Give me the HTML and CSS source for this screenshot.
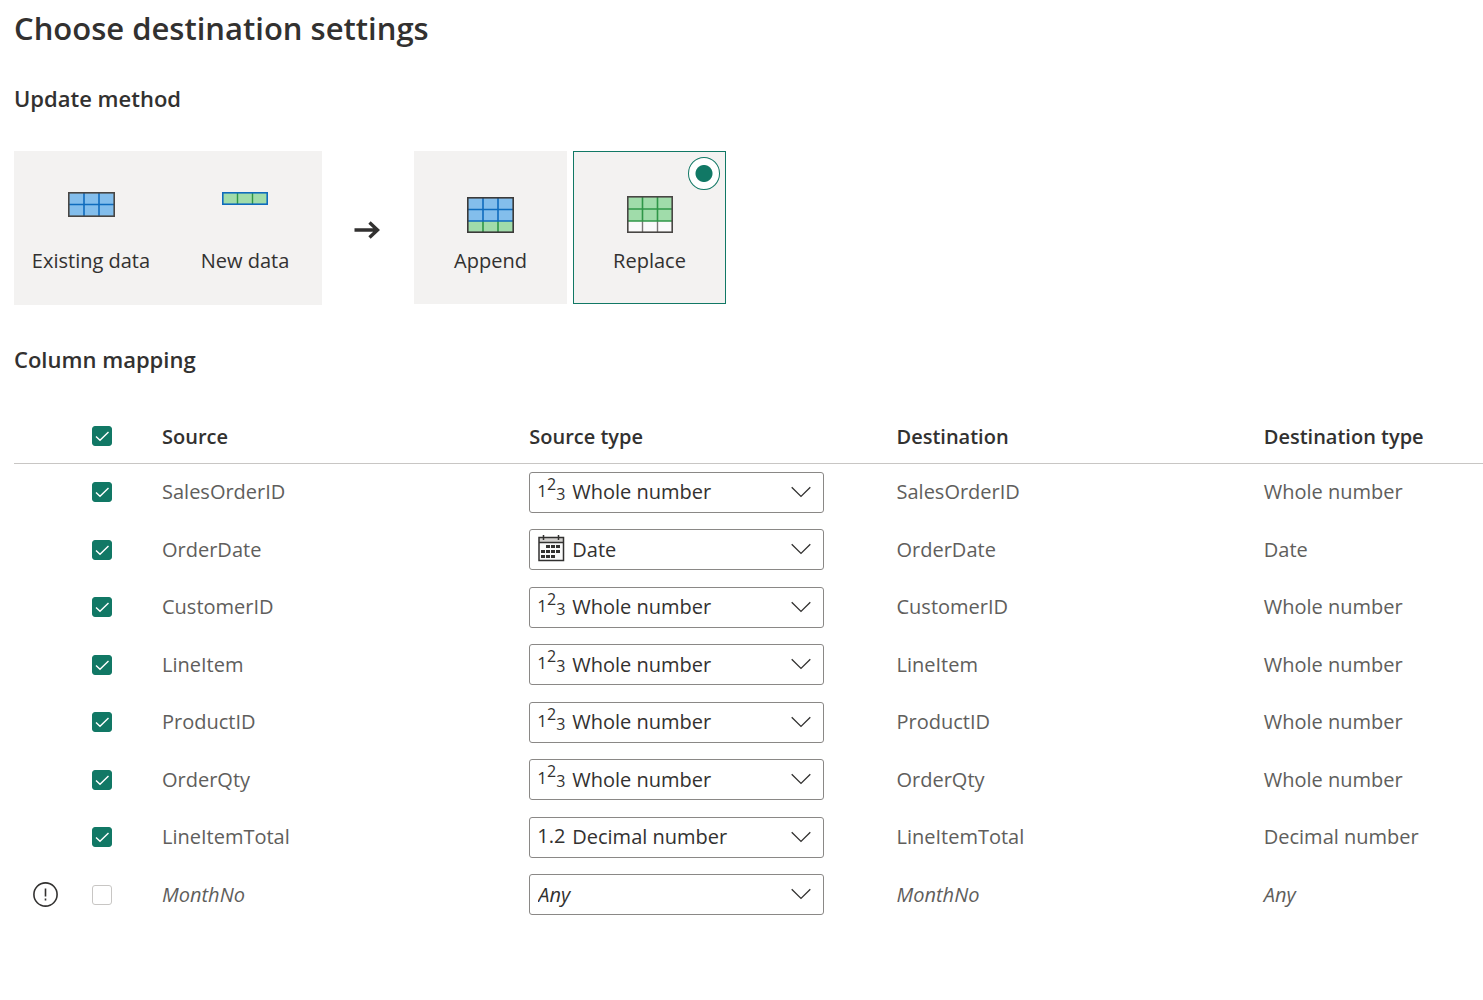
FILE: index.html
```html
<!DOCTYPE html>
<html lang="en">
<head>
  <meta charset="utf-8">
  <title>Choose destination settings</title>
  <link rel="stylesheet" href="styles.css">
</head>
<body>
  <!-- shared icons -->
  <svg class="sprite" aria-hidden="true">
    <symbol id="chevron" viewBox="0 0 20 12">
      <path d="M0.7 1.2 L10 10.4 L19.3 1.2" fill="none" stroke="#323130" stroke-width="1.3"/>
    </symbol>
    <symbol id="calendar" viewBox="0 0 28 28">
      <path d="M2 4 H27 V27 H2 Z" fill="#fafafa"/>
      <path d="M2 4 H27 V8 H2 Z" fill="#d2d0ce"/>
      <path d="M2 3.5 H26.5 V26.5 H2 Z M2 8.5 H26.5 M6.5 1 V6 M21.5 1 V6" fill="none" stroke="#323130" stroke-width="1.5"/>
      <path d="M9 11h4v3h-4z M14 11h4v3h-4z M19 11h4v3h-4z M4 16h4v3h-4z M9 16h4v3h-4z M14 16h4v3h-4z M19 16h4v3h-4z M4 21h4v3h-4z M9 21h4v3h-4z M14 21h4v3h-4z" fill="#323130"/>
    </symbol>
  </svg>

  <h1>Choose destination settings</h1>

  <h2>Update method</h2>
  <div class="methods">
    <div class="inputs">
      <div class="tile">
        <div class="tile-icon">
          <svg width="47" height="25" viewBox="0 0 47 25">
            <rect x="1" y="1" width="45" height="23" fill="#83beec"/>
            <path d="M16 1 V24 M31 1 V24 M1 12.5 H46" stroke="#0f6cbd" stroke-width="1.6"/>
            <rect x="0.8" y="0.8" width="45.4" height="23.4" fill="none" stroke="#484644" stroke-width="1.6"/>
          </svg>
        </div>
        <span>Existing data</span>
      </div>
      <div class="tile">
        <div class="tile-icon">
          <svg width="46" height="13" viewBox="0 0 46 13">
            <rect x="1" y="1" width="44" height="11" fill="#a0dcaa"/>
            <path d="M15.5 1 V12 M30.5 1 V12" stroke="#2f9648" stroke-width="1.4"/>
            <rect x="0.8" y="0.8" width="44.4" height="11.4" fill="none" stroke="#0f6cbd" stroke-width="1.6"/>
          </svg>
        </div>
        <span>New data</span>
      </div>
    </div>

    <svg class="arrow" width="26" height="18" viewBox="0 0 26 18">
      <path d="M0.5 9 H24 M15.5 1.5 L23.5 9 L15.5 16.5" fill="none" stroke="#323130" stroke-width="3.4"/>
    </svg>

    <div class="choices">
      <label class="tile choice">
        <input type="radio" name="method" value="append">
        <div class="tile-icon">
          <svg width="47" height="36" viewBox="0 0 47 36">
            <rect x="1" y="1" width="45" height="24" fill="#83beec"/>
            <rect x="1" y="24" width="45" height="11" fill="#a0dcaa"/>
            <path d="M16 24 V35 M31 24 V35" stroke="#2f9648" stroke-width="1.6"/>
            <path d="M16 1 V24 M31 1 V24 M1 12.5 H46 M1 24 H46" stroke="#0f6cbd" stroke-width="1.6"/>
            <rect x="0.8" y="0.8" width="45.4" height="34.4" fill="none" stroke="#3b3a39" stroke-width="1.6"/>
          </svg>
        </div>
        <span>Append</span>
      </label>
      <label class="tile choice">
        <input type="radio" name="method" value="replace" checked>
        <div class="tile-icon">
          <svg width="46" height="37" viewBox="0 0 46 37">
            <rect x="1" y="1" width="44" height="24" fill="#a0dcaa"/>
            <rect x="1" y="25" width="44" height="11" fill="#fafafa"/>
            <path d="M15.5 25 V36 M30.5 25 V36" stroke="#797775" stroke-width="1.4"/>
            <path d="M15.5 1 V25 M30.5 1 V25 M1 13 H45 M1 25 H45" stroke="#2f9648" stroke-width="1.6"/>
            <rect x="0.8" y="0.8" width="44.4" height="35.4" fill="none" stroke="#484644" stroke-width="1.6"/>
          </svg>
        </div>
        <span>Replace</span>
      </label>
    </div>
  </div>

  <h2>Column mapping</h2>
  <table class="mapping">
    <colgroup>
      <col class="col-status">
      <col class="col-check">
      <col class="col-data">
      <col class="col-data">
      <col class="col-data">
      <col>
    </colgroup>
    <thead>
      <tr>
        <td></td>
        <td><input type="checkbox" aria-label="Select all columns" checked></td>
        <th>Source</th>
        <th>Source type</th>
        <th>Destination</th>
        <th>Destination type</th>
      </tr>
    </thead>
    <tbody>
      <tr>
        <td></td>
        <td><input type="checkbox" id="c1" checked></td>
        <td><label for="c1">SalesOrderID</label></td>
        <td>
          <div class="picker">
            <select aria-label="SalesOrderID source type"><option>Whole number</option></select>
            <span class="type">1<sup>2</sup><sub>3</sub></span>
            <svg class="chevron"><use href="#chevron"/></svg>
          </div>
        </td>
        <td>SalesOrderID</td>
        <td>Whole number</td>
      </tr>
      <tr>
        <td></td>
        <td><input type="checkbox" id="c2" checked></td>
        <td><label for="c2">OrderDate</label></td>
        <td>
          <div class="picker">
            <select aria-label="OrderDate source type"><option>Date</option></select>
            <svg class="type"><use href="#calendar"/></svg>
            <svg class="chevron"><use href="#chevron"/></svg>
          </div>
        </td>
        <td>OrderDate</td>
        <td>Date</td>
      </tr>
      <tr>
        <td></td>
        <td><input type="checkbox" id="c3" checked></td>
        <td><label for="c3">CustomerID</label></td>
        <td>
          <div class="picker">
            <select aria-label="CustomerID source type"><option>Whole number</option></select>
            <span class="type">1<sup>2</sup><sub>3</sub></span>
            <svg class="chevron"><use href="#chevron"/></svg>
          </div>
        </td>
        <td>CustomerID</td>
        <td>Whole number</td>
      </tr>
      <tr>
        <td></td>
        <td><input type="checkbox" id="c4" checked></td>
        <td><label for="c4">LineItem</label></td>
        <td>
          <div class="picker">
            <select aria-label="LineItem source type"><option>Whole number</option></select>
            <span class="type">1<sup>2</sup><sub>3</sub></span>
            <svg class="chevron"><use href="#chevron"/></svg>
          </div>
        </td>
        <td>LineItem</td>
        <td>Whole number</td>
      </tr>
      <tr>
        <td></td>
        <td><input type="checkbox" id="c5" checked></td>
        <td><label for="c5">ProductID</label></td>
        <td>
          <div class="picker">
            <select aria-label="ProductID source type"><option>Whole number</option></select>
            <span class="type">1<sup>2</sup><sub>3</sub></span>
            <svg class="chevron"><use href="#chevron"/></svg>
          </div>
        </td>
        <td>ProductID</td>
        <td>Whole number</td>
      </tr>
      <tr>
        <td></td>
        <td><input type="checkbox" id="c6" checked></td>
        <td><label for="c6">OrderQty</label></td>
        <td>
          <div class="picker">
            <select aria-label="OrderQty source type"><option>Whole number</option></select>
            <span class="type">1<sup>2</sup><sub>3</sub></span>
            <svg class="chevron"><use href="#chevron"/></svg>
          </div>
        </td>
        <td>OrderQty</td>
        <td>Whole number</td>
      </tr>
      <tr>
        <td></td>
        <td><input type="checkbox" id="c7" checked></td>
        <td><label for="c7">LineItemTotal</label></td>
        <td>
          <div class="picker">
            <select aria-label="LineItemTotal source type"><option>Decimal number</option></select>
            <span class="type decimal">1.2</span>
            <svg class="chevron"><use href="#chevron"/></svg>
          </div>
        </td>
        <td>LineItemTotal</td>
        <td>Decimal number</td>
      </tr>
      <tr class="unmapped">
        <td>
          <svg class="warning" width="25" height="25" viewBox="0 0 25 25">
            <circle cx="12.5" cy="12.5" r="11.6" fill="none" stroke="#323130" stroke-width="1.6"/>
            <path d="M12.5 6.5 V14.5 M12.5 16.5 V18.5" stroke="#323130" stroke-width="1.6"/>
          </svg>
        </td>
        <td><input type="checkbox" id="c8"></td>
        <td><label for="c8">MonthNo</label></td>
        <td>
          <div class="picker">
            <select class="no-icon" aria-label="MonthNo source type"><option>Any</option></select>
            <svg class="chevron"><use href="#chevron"/></svg>
          </div>
        </td>
        <td>MonthNo</td>
        <td>Any</td>
      </tr>
    </tbody>
  </table>
</body>
</html>
```
FILE: styles.css
```css
body {
  margin: 0;
  padding: 8px 0 0 14px;
  font-family: "Segoe UI", "Open Sans", "Noto Sans", sans-serif;
  font-size: 20px;
  line-height: 24px;
  color: #323130;
  background: #fff;
}

h1 {
  margin: 0;
  font-size: 31px;
  line-height: 40px;
  font-weight: 600;
}

h2 {
  margin: 34px 0 0;
  font-size: 22px;
  line-height: 32px;
  font-weight: 600;
}

svg {
  display: block;
}

.sprite {
  position: absolute;
  width: 0;
  height: 0;
}

/* update method */
.methods {
  display: flex;
  align-items: flex-start;
  margin: 37px 0 38px;
}

.inputs {
  display: flex;
  height: 154px;
  background: #f3f2f1;
}

.tile {
  display: flex;
  flex-direction: column;
  align-items: center;
  box-sizing: border-box;
  width: 154px;
  padding-top: 41px;
}

.tile-icon {
  display: flex;
  align-items: flex-start;
  height: 41px;
  margin-bottom: 16px;
}

.arrow {
  margin: 70px 34px 0 32px;
}

.choices {
  display: flex;
  gap: 6px;
}

.choice {
  position: relative;
  width: 153px;
  height: 153px;
  padding-top: 40px;
  border: 1px solid #f3f2f1;
  background: #f3f2f1;
  cursor: pointer;
}

.choice .tile-icon {
  align-items: flex-end;
}

.choice:has(input:checked) {
  border-color: #117865;
}

.choice input {
  appearance: none;
  position: absolute;
  top: 5px;
  right: 5px;
  width: 32px;
  height: 33px;
  margin: 0;
  border: 1px solid #117865;
  border-radius: 50%;
  background: radial-gradient(circle, #117865 8px, #fff 9px);
}

.choice input:not(:checked) {
  opacity: 0;
}

/* column mapping */
.mapping {
  width: 100%;
  margin-top: 34px;
  border-collapse: collapse;
  table-layout: fixed;
}

.col-status,
.col-check {
  width: 74px;
}

.col-data {
  width: 25%;
}

.mapping th,
.mapping td {
  padding: 0;
  text-align: left;
  vertical-align: middle;
}

.mapping th {
  padding-top: 2px;
  font-weight: 600;
}

.mapping thead tr {
  height: 54px;
  border-bottom: 1px solid #c8c6c4;
}

.mapping tbody tr {
  height: 58px;
}

.mapping tbody tr:nth-child(even) {
  height: 57px;
}

.mapping tbody td {
  color: #605e5c;
}

.mapping input {
  appearance: none;
  display: block;
  box-sizing: border-box;
  width: 20px;
  height: 20px;
  margin: 0 0 0 4px;
  border: 1px solid #c8c6c4;
  border-radius: 3px;
}

.mapping input:checked {
  border-color: #117865;
  background: #117865 url("data:image/svg+xml,%3Csvg xmlns='http://www.w3.org/2000/svg' viewBox='0 0 18 18'%3E%3Cpath d='M3 9.5 L7 13.3 L15.5 5' fill='none' stroke='%23fff' stroke-width='1.4'/%3E%3C/svg%3E") center / 18px 18px no-repeat;
}

.picker {
  position: relative;
  width: 295px;
  max-width: 100%;
}

.picker select {
  appearance: none;
  display: block;
  box-sizing: border-box;
  width: 100%;
  height: 41px;
  padding: 0 40px 0 42px;
  border: 1px solid #8a8886;
  border-radius: 3px;
  background: #fff;
  font: inherit;
  color: #323130;
}

.picker .no-icon {
  padding-left: 8px;
}

.type {
  position: absolute;
  top: 5px;
  left: 8px;
  width: 28px;
  height: 28px;
  font-size: 17px;
  line-height: 28px;
  color: #323130;
  pointer-events: none;
}

.type sup,
.type sub {
  font-size: 16px;
  line-height: 0;
}

.type sup {
  vertical-align: 7px;
}

.type sub {
  vertical-align: -3px;
}

.type.decimal {
  font-size: 20px;
}

.chevron {
  position: absolute;
  top: 14px;
  right: 13px;
  width: 20px;
  height: 12px;
  pointer-events: none;
}

.warning {
  margin-left: 19px;
}

.unmapped {
  font-style: italic;
}
```
